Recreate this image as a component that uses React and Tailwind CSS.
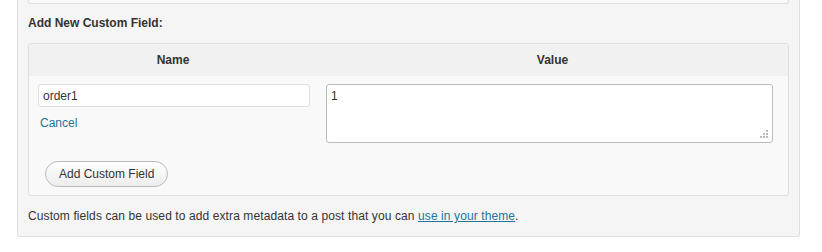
export default function App() {
  return (
    <div className="h-[252px] w-[822px] bg-white font-['Liberation_Sans',Arial,sans-serif] text-[12px] text-[#333]">
      <div className="ml-[17px] h-[237px] w-[783px] rounded-b-[3px] border-x border-b border-[#dfdfdf] bg-[#f5f5f5] px-[10px]">
        <div className="h-[4px] rounded-b-[3px] border-x border-b border-[#dfdfdf] bg-[#f9f9f9]" />
        <h3 className="mt-[12px] text-[12px] font-bold leading-[14px] text-[#333]">
          Add New Custom Field:
        </h3>
        <div className="mt-[13px] rounded-[3px] border border-[#dfdfdf] bg-[#f9f9f9]">
          <div className="grid h-[32px] grid-cols-[288px_1fr] items-center bg-[#f1f1f1] font-bold text-[#333]">
            <div className="text-center">Name</div>
            <div className="text-center">Value</div>
          </div>
          <div className="grid grid-cols-[288px_1fr] pt-[8px]">
            <div className="pl-[9px] pr-[7px]">
              <input
                type="text"
                defaultValue="order1"
                className="block h-[23px] w-full rounded-[3px] border border-[#dfdfdf] bg-white px-[4px] text-[12px] text-[#333] outline-none"
              />
              <a href="#" className="mt-[9px] ml-[2px] block leading-[14px] text-[#21759b]">
                Cancel
              </a>
            </div>
            <div className="relative pl-[9px] pr-[15px]">
              <textarea
                defaultValue="1"
                className="block h-[59px] w-full resize-none rounded-[3px] border border-[#bbb] bg-white px-[4px] py-[3px] text-[12px] leading-[16px] text-[#333] outline-none"
              />
              <svg
                className="absolute right-[19px] bottom-[4px]"
                width="10"
                height="10"
                viewBox="0 0 10 10"
                fill="#bbb"
              >
                <rect x="7" y="1" width="2" height="2" />
                <rect x="4" y="4" width="2" height="2" />
                <rect x="7" y="4" width="2" height="2" />
                <rect x="1" y="7" width="2" height="2" />
                <rect x="4" y="7" width="2" height="2" />
                <rect x="7" y="7" width="2" height="2" />
              </svg>
            </div>
          </div>
          <div className="pl-[16px] pt-[18px] pb-[8px]">
            <button
              type="button"
              className="h-[26px] rounded-full border border-[#bbb] bg-gradient-to-b from-white to-[#ededed] px-[13px] text-[12px] text-[#333]"
            >
              Add Custom Field
            </button>
          </div>
        </div>
        <p className="mt-[13px] leading-[14px] tracking-[0.1px] text-[#333]">
          Custom fields can be used to add extra metadata to a post that you can{" "}
          <a href="#" className="text-[#21759b] underline">
            use in your theme
          </a>
          .
        </p>
      </div>
    </div>
  );
}
